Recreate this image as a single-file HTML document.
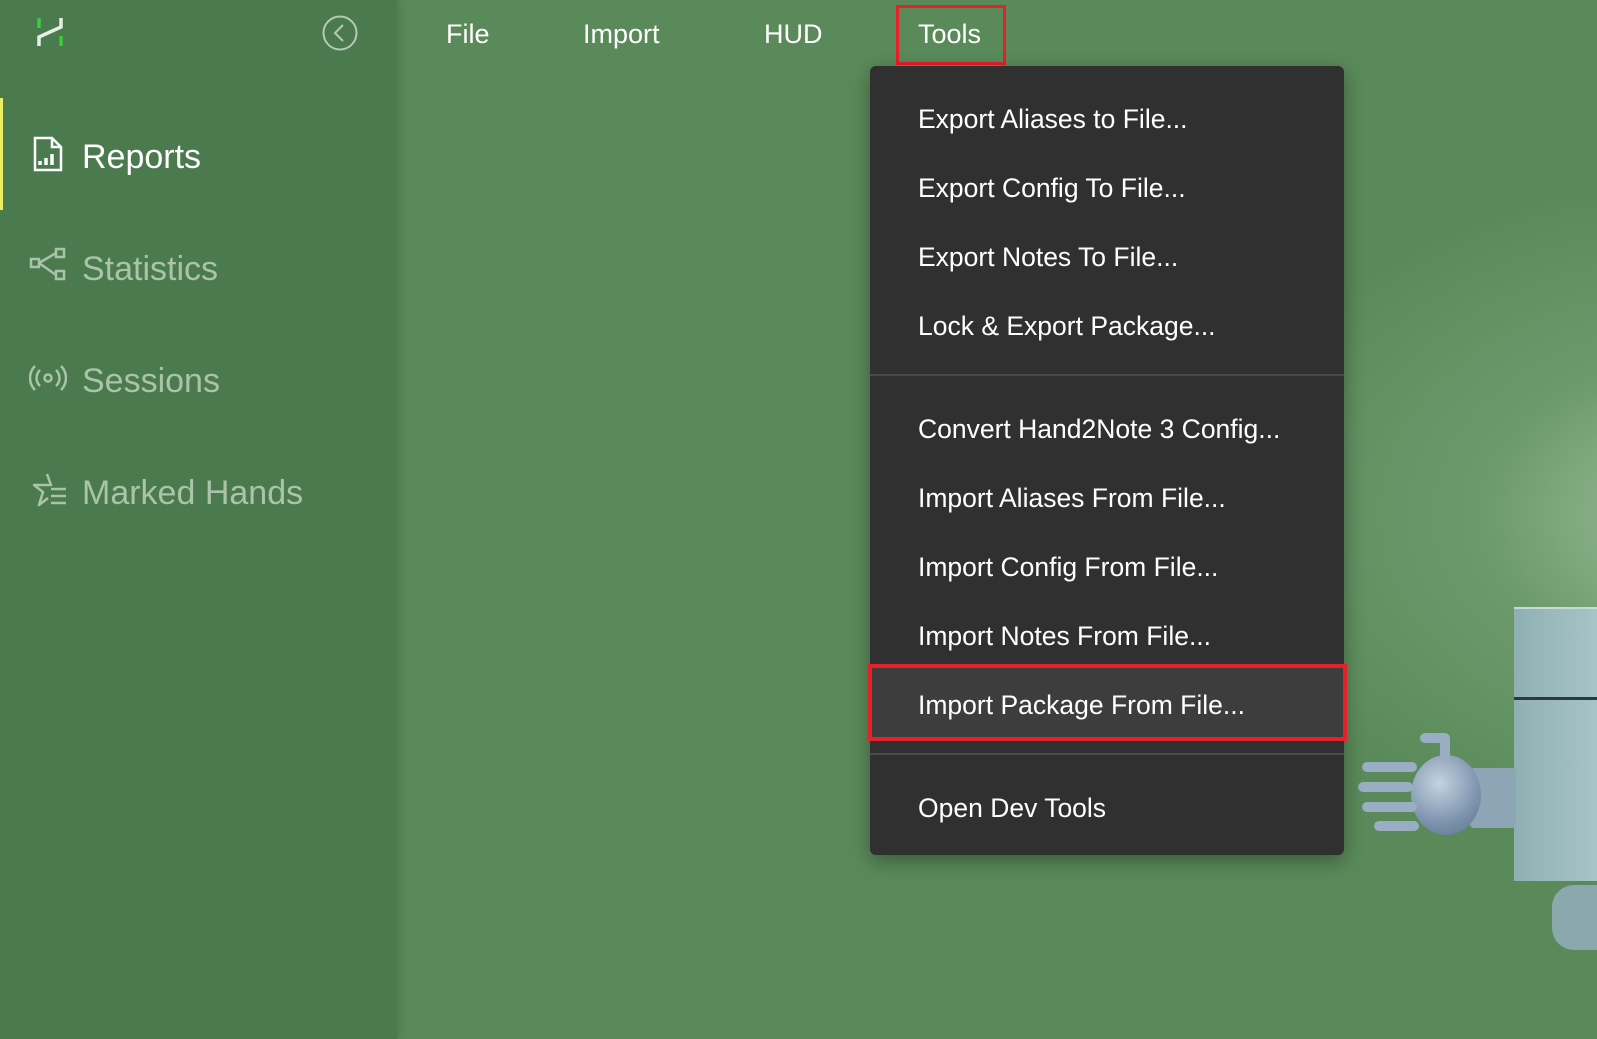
<!DOCTYPE html>
<html><head><meta charset="utf-8"><style>
*{margin:0;padding:0;box-sizing:border-box}
body{width:1597px;height:1039px;overflow:hidden;background:#5a8a5a;font-family:"Segoe UI","Liberation Sans",sans-serif;position:relative}
.glow{position:absolute;left:1150px;top:200px;width:800px;height:700px;background:radial-gradient(ellipse at 72% 45%,rgba(190,218,190,.7) 0%,rgba(150,190,150,.3) 30%,rgba(90,138,90,0) 62%)}
.side{position:absolute;left:0;top:0;width:397px;height:1039px;background:#4a7a4e;box-shadow:3px 0 8px rgba(0,0,0,.12)}
.nav{position:absolute;font-size:34px;color:#a9c4a9;font-weight:300}
.top{position:absolute;top:19px;font-size:27px;color:#fff}
.menu{position:absolute;left:870px;top:66px;width:474px;height:789px;background:#303030;border-radius:6px;box-shadow:0 6px 20px rgba(0,0,0,.35)}
.mi{position:absolute;left:48px;font-size:26.5px;color:#fff;line-height:34px}
.div{position:absolute;left:0;width:474px;height:2px;background:#4a4a4a}
.red{position:absolute;border:4px solid #e8202a}
</style></head><body>
<div class="glow"></div>
<div style="position:absolute;left:1514px;top:607px;width:90px;height:274px;background:linear-gradient(90deg,#8fb0b3,#a9c6c8);border-top:2px solid #c6dada"></div>
<div style="position:absolute;left:1514px;top:697px;width:90px;height:3px;background:#2a3a40"></div>
<div style="position:absolute;left:1552px;top:885px;width:60px;height:65px;background:#8aa8ad;border-radius:22px 0 0 22px"></div>
<div style="position:absolute;left:1470px;top:768px;width:46px;height:60px;background:#8ea5b6;border-radius:4px"></div>
<div style="position:absolute;left:1411px;top:755px;width:70px;height:80px;background:radial-gradient(circle at 40% 35%,#c6d3e0,#7d93ad 60%,#5c718c);border-radius:50%"></div>
<div style="position:absolute;left:1362px;top:762px;width:55px;height:10px;background:#9aaec3;border-radius:5px"></div>
<div style="position:absolute;left:1358px;top:782px;width:55px;height:10px;background:#9aaec3;border-radius:5px"></div>
<div style="position:absolute;left:1362px;top:802px;width:55px;height:10px;background:#9aaec3;border-radius:5px"></div>
<div style="position:absolute;left:1374px;top:821px;width:45px;height:10px;background:#9aaec3;border-radius:5px"></div>
<div style="position:absolute;left:1420px;top:733px;width:30px;height:10px;background:#9aaec3;border-radius:5px"></div>
<div style="position:absolute;left:1440px;top:735px;width:10px;height:25px;background:#9aaec3;border-radius:5px"></div>

<div class="side">
  <svg style="position:absolute;left:35px;top:17px" width="30" height="30" viewBox="0 0 30 30"><path d="M4 1v10M26 19v10" stroke="#3ccc3c" stroke-width="3.5"/><path d="M4 29v-9l22-10V1" stroke="#e6efe6" stroke-width="3.5" fill="none"/></svg>
  <svg style="position:absolute;left:321px;top:14px" width="38" height="38" viewBox="0 0 38 38"><circle cx="19" cy="19" r="16.5" stroke="#b5cbb5" stroke-width="2" fill="none"/><path d="M22 11l-8 8 8 8" stroke="#b5cbb5" stroke-width="2" fill="none"/></svg>
  <div style="position:absolute;left:0;top:98px;width:3px;height:112px;background:#e8f060"></div>
  <div class="nav" style="left:82px;top:138px;color:#fff;font-weight:400">Reports</div>
  <svg style="position:absolute;left:33px;top:136px" width="30" height="36" viewBox="0 0 30 36"><path d="M2 2h17l9 9v23H2z M19 2v9h9" stroke="#fff" stroke-width="2.5" fill="none"/><path d="M7 29v-4M13 29v-7M19 29v-11" stroke="#fff" stroke-width="3.5"/></svg>
  <div class="nav" style="left:82px;top:250px">Statistics</div>
  <svg style="position:absolute;left:29px;top:247px" width="38" height="36" viewBox="0 0 38 36"><rect x="2" y="12" width="8" height="8" stroke="#a9c4a9" stroke-width="2.5" fill="none"/><rect x="27" y="2" width="8" height="8" stroke="#a9c4a9" stroke-width="2.5" fill="none"/><rect x="27" y="24" width="8" height="8" stroke="#a9c4a9" stroke-width="2.5" fill="none"/><path d="M10 16L27 6M10 16l17 12" stroke="#a9c4a9" stroke-width="2.5"/></svg>
  <div class="nav" style="left:82px;top:362px">Sessions</div>
  <svg style="position:absolute;left:29px;top:364px" width="38" height="28" viewBox="0 0 38 28"><circle cx="19" cy="14" r="3.5" stroke="#a9c4a9" stroke-width="2.5" fill="none"/><path d="M11 6a11 11 0 0 0 0 16M27 6a11 11 0 0 1 0 16M6 2a17 17 0 0 0 0 24M32 2a17 17 0 0 1 0 24" stroke="#a9c4a9" stroke-width="2.5" fill="none"/></svg>
  <div class="nav" style="left:82px;top:474px">Marked Hands</div>
  <svg style="position:absolute;left:29px;top:472px" width="40" height="36" viewBox="0 0 40 36"><path d="M18 2l4 11h-17l9 7-4 13 9-7" stroke="#a9c4a9" stroke-width="2.5" fill="none" stroke-linejoin="round"/><path d="M22 17h15M22 24h15M22 31h15" stroke="#a9c4a9" stroke-width="2.5"/></svg>
</div>

<div class="top" style="left:446px">File</div>
<div class="top" style="left:583px">Import</div>
<div class="top" style="left:764px">HUD</div>
<div class="top" style="left:918px">Tools</div>
<div class="red" style="left:896px;top:5px;width:110px;height:60px;border-width:3px"></div>

<div class="menu">
  <div class="mi" style="top:36px">Export Aliases to File...</div>
  <div class="mi" style="top:105px">Export Config To File...</div>
  <div class="mi" style="top:174px">Export Notes To File...</div>
  <div class="mi" style="top:243px">Lock &amp; Export Package...</div>
  <div class="div" style="top:308px"></div>
  <div class="mi" style="top:346px">Convert Hand2Note 3 Config...</div>
  <div class="mi" style="top:415px">Import Aliases From File...</div>
  <div class="mi" style="top:484px">Import Config From File...</div>
  <div class="mi" style="top:553px">Import Notes From File...</div>
  <div style="position:absolute;left:0;top:600px;width:474px;height:74px;background:#3d3d3d"></div>
  <div class="mi" style="top:622px">Import Package From File...</div>
  <div class="div" style="top:687px"></div>
  <div class="mi" style="top:725px">Open Dev Tools</div>
</div>
<div class="red" style="left:868px;top:664px;width:479px;height:77px"></div>
</body></html>
